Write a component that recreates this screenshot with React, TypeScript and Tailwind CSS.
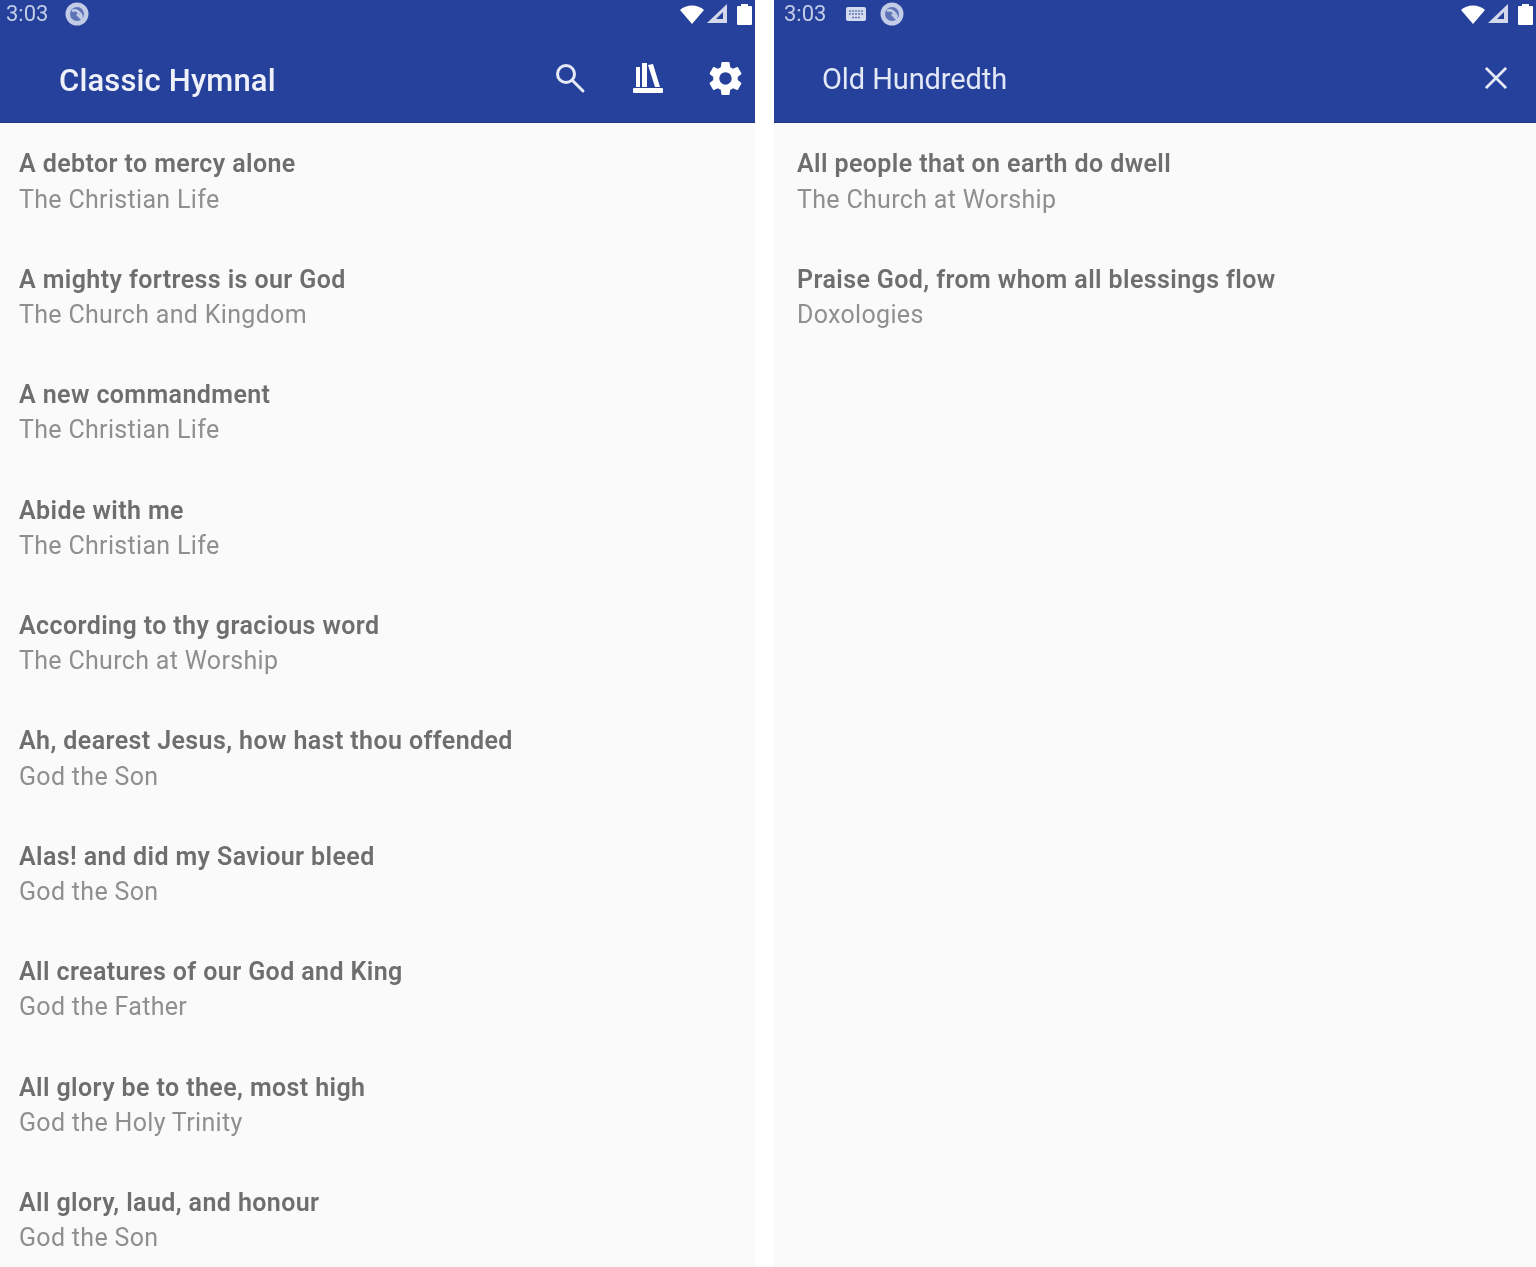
const left: [string, string][] = [
  ["A debtor to mercy alone", "The Christian Life"],
  ["A mighty fortress is our God", "The Church and Kingdom"],
  ["A new commandment", "The Christian Life"],
  ["Abide with me", "The Christian Life"],
  ["According to thy gracious word", "The Church at Worship"],
  ["Ah, dearest Jesus, how hast thou offended", "God the Son"],
  ["Alas! and did my Saviour bleed", "God the Son"],
  ["All creatures of our God and King", "God the Father"],
  ["All glory be to thee, most high", "God the Holy Trinity"],
  ["All glory, laud, and honour", "God the Son"],
];
const right: [string, string][] = [
  ["All people that on earth do dwell", "The Church at Worship"],
  ["Praise God, from whom all blessings flow", "Doxologies"],
];

function Row({ t, s, pad }: { t: string; s: string; pad: string }) {
  return (
    <div className={`h-[115.4px] shrink-0 pt-[23.4px] ${pad}`}>
      <div className="text-[25px] leading-[35.3px] font-semibold tracking-[0.4px] text-[#6e6e6e] whitespace-nowrap">{t}</div>
      <div className="text-[25px] leading-[35px] tracking-[0.32px] text-[#8f8f8f] whitespace-nowrap">{s}</div>
    </div>
  );
}

function Sync() {
  return (
    <svg width="26" height="26" viewBox="0 0 26 26" fill="none">
      <circle cx="13" cy="13" r="11.5" fill="#c3cce6" />
      <circle cx="13" cy="13" r="7" fill="#5f74b6" />
      <path d="M8 10c4-2 8 1 10 6" stroke="#c3cce6" strokeWidth="2.5" />
      <path d="M13 13l7 7" stroke="#c3cce6" strokeWidth="2.5" />
    </svg>
  );
}

function StatusRight() {
  return (
    <div className="flex items-center">
      <svg width="24" height="19" viewBox="0 0 24 19"><path d="M0 5C6-1 18-1 24 5L12 19Z" fill="#ffffff" /></svg>
      <svg width="22" height="20" viewBox="0 0 22 20" className="ml-[2px]">
        <path d="M21 0V19H1Z" fill="#ffffff" opacity="0.8" />
        <path d="M17 8V15H10Z" fill="#26419b" />
      </svg>
      <svg width="15" height="22" viewBox="0 0 15 22" className="ml-[9px] mr-[3px]">
        <path d="M0 4a1 1 0 0 1 1-1h3V1h7v2h3a1 1 0 0 1 1 1v17a1 1 0 0 1-1 1H1a1 1 0 0 1-1-1Z" fill="#ffffff" />
      </svg>
    </div>
  );
}

export default function App() {
  return (
    <div className="flex h-[1267px] w-[1536px] overflow-hidden bg-white font-['Roboto',sans-serif] blur-[0.6px]">
      <div className="flex w-[755px] shrink-0 flex-col bg-[#fafafa]">
        <header className="h-[123px] shrink-0 bg-[#26419b] border-b border-[#1f3680] text-white">
          <div className="flex h-[28px] items-center justify-between pl-[6px]">
            <div className="flex items-center gap-[16px]">
              <span className="text-[22px] leading-[28px] text-[#c3cce6]">3:03</span>
              <Sync />
            </div>
            <StatusRight />
          </div>
          <div className="flex h-[94px] items-center justify-between pl-[59px] pr-[9px]">
            <span className="mt-[12px] text-[31px] font-medium tracking-[0.15px] text-[#eef1fa]">Classic Hymnal</span>
            <div className="mt-[6px] flex items-center">
              <svg width="32" height="32" viewBox="0 0 32 32" fill="none" stroke="#e6eaf7" strokeWidth="3">
                <circle cx="12" cy="12" r="8.5" />
                <path d="M18.5 18.5L29 29" strokeLinecap="round" />
              </svg>
              <svg width="30" height="30" viewBox="0 0 30 30" fill="#ffffff" className="ml-[47px]">
                <rect x="3" y="4" width="4" height="20" />
                <rect x="9" y="0" width="5" height="24" />
                <path d="M15 2L20 1L27 24H22Z" />
                <rect x="0" y="25" width="30" height="5" rx="1" />
              </svg>
              <svg width="41" height="41" viewBox="0 0 24 24" fill="#ffffff" className="ml-[42px]">
                <path d="M19.14 12.94c.04-.3.06-.61.06-.94 0-.32-.02-.64-.07-.94l2.03-1.58a.49.49 0 0 0 .12-.61l-1.92-3.32a.488.488 0 0 0-.59-.22l-2.39.96c-.5-.38-1.03-.7-1.62-.94l-.36-2.54a.484.484 0 0 0-.48-.41h-3.84c-.24 0-.43.17-.47.41l-.36 2.54c-.59.24-1.13.57-1.62.94l-2.39-.96c-.22-.08-.47 0-.59.22L2.74 8.87c-.12.21-.08.47.12.61l2.03 1.58c-.05.3-.09.63-.09.94s.02.64.07.94l-2.03 1.58a.49.49 0 0 0-.12.61l1.92 3.32c.12.22.37.29.59.22l2.39-.96c.5.38 1.03.7 1.62.94l.36 2.54c.05.24.24.41.48.41h3.84c.24 0 .44-.17.47-.41l.36-2.54c.59-.24 1.13-.56 1.62-.94l2.39.96c.22.08.47 0 .59-.22l1.92-3.32c.12-.22.07-.47-.12-.61l-2.01-1.58zM12 15.6c-1.98 0-3.6-1.62-3.6-3.6s1.62-3.6 3.6-3.6 3.6 1.62 3.6 3.6-1.62 3.6-3.6 3.6z" />
              </svg>
            </div>
          </div>
        </header>
        {left.map(([t, s]) => <Row key={t} t={t} s={s} pad="pl-[19px]" />)}
      </div>
      <div className="ml-[19px] flex w-[762px] shrink-0 flex-col bg-[#fafafa]">
        <header className="h-[123px] shrink-0 bg-[#26419b] border-b border-[#1f3680] text-white">
          <div className="flex h-[28px] items-center justify-between pl-[10px]">
            <div className="flex items-center">
              <span className="text-[22px] leading-[28px] text-[#c3cce6]">3:03</span>
              <svg width="20" height="14" viewBox="0 0 20 14" className="ml-[20px]">
                <rect width="20" height="14" rx="2" fill="#d5dbef" />
                <path d="M3 4h14M3 7h14M6 10.5h8" stroke="#5f74b6" strokeWidth="1.5" strokeDasharray="2 1" />
              </svg>
              <span className="ml-[13px] flex"><Sync /></span>
            </div>
            <StatusRight />
          </div>
          <div className="flex h-[94px] items-center justify-between pl-[48px] pr-[29px]">
            <span className="mt-[9px] text-[29px] tracking-[-0.1px] text-[#e3e8f6]">Old Hundredth</span>
            <svg width="22" height="22" viewBox="0 0 24 24" stroke="#e6eaf7" strokeWidth="3" className="mt-[6px]">
              <path d="M1 1L23 23M23 1L1 23" />
            </svg>
          </div>
        </header>
        {right.map(([t, s]) => <Row key={t} t={t} s={s} pad="pl-[23px]" />)}
      </div>
    </div>
  );
}
